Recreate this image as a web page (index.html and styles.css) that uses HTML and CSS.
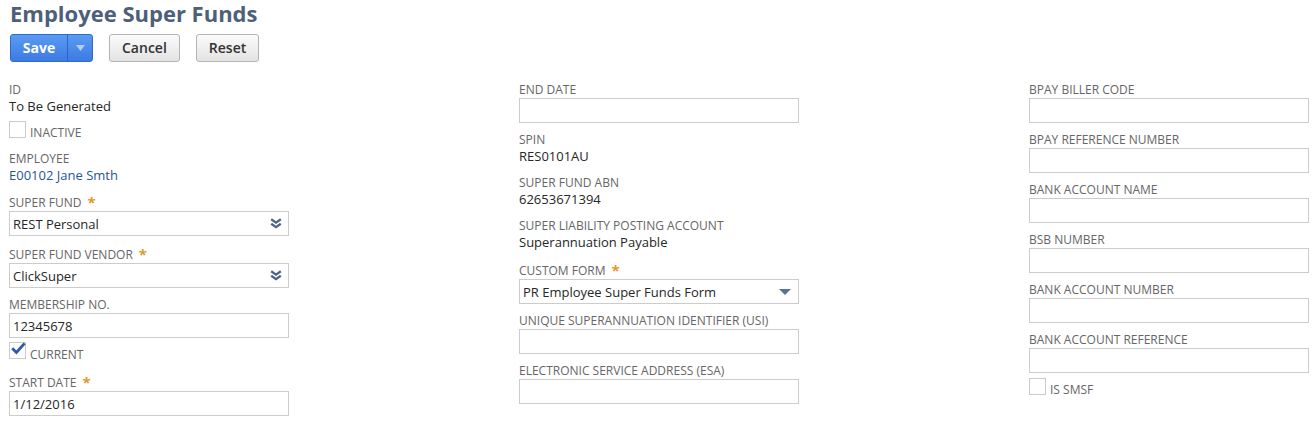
FILE: index.html
```html
<!DOCTYPE html>
<html lang="en">
<head>
<meta charset="utf-8">
<title>Employee Super Funds</title>
<link rel="stylesheet" href="styles.css">
</head>
<body>
<div class="page">
  <h1 class="title">Employee Super Funds</h1>
  <div class="toolbar">
    <div class="split">
      <button class="split-main" type="button">Save</button>
      <button class="split-arrow" type="button" aria-label="More save options">
        <svg width="9" height="6" viewBox="0 0 9 6"><path d="M0 0H9L4.5 6Z" fill="#b5cbef"/></svg>
      </button>
    </div>
    <button class="btn" type="button">Cancel</button>
    <button class="btn" type="button">Reset</button>
  </div>

  <div class="form">
    <div class="col">
      <div class="field read">
        <div class="label">ID</div>
        <div class="value">To Be Generated</div>
      </div>
      <div class="check-row check-inactive">
        <svg class="check" width="17" height="17" viewBox="0 0 17 17"><rect x="0.5" y="0.5" width="16" height="16" fill="#fff" stroke="#cacaca"/></svg>
        <span class="check-text">Inactive</span>
      </div>
      <div class="field read loose">
        <div class="label">Employee</div>
        <div class="value link">E00102 Jane Smth</div>
      </div>
      <div class="field loose">
        <div class="label">Super Fund <span class="req">*</span></div>
        <div class="input select">
          <span>REST Personal</span>
          <svg width="12" height="11" viewBox="0 0 12 11"><path d="M1.2 1.3 6 4.6 10.8 1.3M1.2 5.8 6 9.1 10.8 5.8" fill="none" stroke="#4e6489" stroke-width="2.3"/></svg>
        </div>
      </div>
      <div class="field">
        <div class="label">Super Fund Vendor <span class="req">*</span></div>
        <div class="input select">
          <span>ClickSuper</span>
          <svg width="12" height="11" viewBox="0 0 12 11"><path d="M1.2 1.3 6 4.6 10.8 1.3M1.2 5.8 6 9.1 10.8 5.8" fill="none" stroke="#4e6489" stroke-width="2.3"/></svg>
        </div>
      </div>
      <div class="field">
        <div class="label">Membership No.</div>
        <input class="input" type="text" value="12345678">
      </div>
      <div class="check-row check-current">
        <svg class="check" width="17" height="17" viewBox="0 0 17 17"><rect x="0.5" y="0.5" width="16" height="16" fill="#fff" stroke="#cacaca"/><path d="M3.2 6.2 7.4 10.4 15.6 1.4" fill="none" stroke="#2b5ba6" stroke-width="2.8"/></svg>
        <span class="check-text">Current</span>
      </div>
      <div class="field">
        <div class="label">Start Date <span class="req">*</span></div>
        <input class="input" type="text" value="1/12/2016">
      </div>
    </div>

    <div class="col">
      <div class="field">
        <div class="label">End Date</div>
        <input class="input" type="text" value="">
      </div>
      <div class="field read">
        <div class="label">Spin</div>
        <div class="value">RES0101AU</div>
      </div>
      <div class="field read">
        <div class="label">Super Fund ABN</div>
        <div class="value">62653671394</div>
      </div>
      <div class="field read wide">
        <div class="label">Super Liability Posting Account</div>
        <div class="value">Superannuation Payable</div>
      </div>
      <div class="field">
        <div class="label">Custom Form <span class="req">*</span></div>
        <div class="input select">
          <span>PR Employee Super Funds Form</span>
          <svg class="tri" width="12" height="6" viewBox="0 0 12 6"><path d="M0 0H12L6 6Z" fill="#5b7196"/></svg>
        </div>
      </div>
      <div class="field">
        <div class="label">Unique Superannuation Identifier (USI)</div>
        <input class="input" type="text" value="">
      </div>
      <div class="field">
        <div class="label">Electronic Service Address (ESA)</div>
        <input class="input" type="text" value="">
      </div>
    </div>

    <div class="col">
      <div class="field">
        <div class="label">BPAY Biller Code</div>
        <input class="input" type="text" value="">
      </div>
      <div class="field">
        <div class="label">BPAY Reference Number</div>
        <input class="input" type="text" value="">
      </div>
      <div class="field">
        <div class="label">Bank Account Name</div>
        <input class="input" type="text" value="">
      </div>
      <div class="field">
        <div class="label">BSB Number</div>
        <input class="input" type="text" value="">
      </div>
      <div class="field">
        <div class="label">Bank Account Number</div>
        <input class="input" type="text" value="">
      </div>
      <div class="field">
        <div class="label">Bank Account Reference</div>
        <input class="input" type="text" value="">
      </div>
      <div class="check-row check-smsf">
        <svg class="check" width="17" height="17" viewBox="0 0 17 17"><rect x="0.5" y="0.5" width="16" height="16" fill="#fff" stroke="#cacaca"/></svg>
        <span class="check-text">Is SMSF</span>
      </div>
    </div>
  </div>
</div>
</body>
</html>
```
FILE: styles.css
```css
* { box-sizing: border-box; }

body {
  margin: 0;
  background: #ffffff;
  font-family: "Open Sans", "Liberation Sans", sans-serif;
  color: #262626;
}

.page {
  padding-left: 10px;
}

.title {
  margin: 0;
  font-size: 22px;
  line-height: 26px;
  font-weight: 700;
  color: #4d5f79;
}

.toolbar {
  display: flex;
  gap: 16px;
  margin-top: 8px;
  height: 28px;
}

.btn {
  height: 28px;
  padding: 0 12px;
  border: 1px solid #b3b3b3;
  border-radius: 3px;
  background: linear-gradient(#fbfbfb, #e3e3e3);
  font-family: "Open Sans", "Liberation Sans", sans-serif;
  font-size: 14px;
  font-weight: 600;
  line-height: 26px;
  color: #333333;
}

.split {
  display: flex;
  height: 28px;
  border: 1px solid #2f69cf;
  border-radius: 3px;
  overflow: hidden;
  background: linear-gradient(#5b9bf1, #3b7be3);
}

.split-main {
  width: 56px;
  padding: 0;
  border: 0;
  background: transparent;
  font-family: "Open Sans", "Liberation Sans", sans-serif;
  font-size: 14px;
  font-weight: 700;
  line-height: 26px;
  color: #ffffff;
}

.split-arrow {
  width: 25px;
  padding: 0;
  border: 0;
  border-left: 1px solid #2c63c4;
  background: transparent;
  display: flex;
  align-items: center;
  justify-content: center;
}

.form {
  display: grid;
  grid-template-columns: 510px 510px 280px;
  margin-top: 19px;
  margin-left: -1px;
}

.col {
  display: flex;
  flex-direction: column;
}

.field {
  margin-bottom: 8px;
}

.field.read {
  margin-bottom: 9px;
}

.field.loose {
  margin-bottom: 10px;
}

.field.wide {
  margin-bottom: 11px;
}

.label {
  display: flex;
  align-items: flex-start;
  gap: 6px;
  height: 17px;
  font-size: 12px;
  line-height: 17px;
  color: #666666;
  text-transform: uppercase;
  white-space: nowrap;
}

.req {
  font-size: 15px;
  font-weight: 700;
  line-height: 17px;
  color: #df9a2b;
}

.value {
  font-size: 13px;
  line-height: 17px;
  color: #262626;
}

.value.link {
  color: #255599;
}

.input {
  display: flex;
  align-items: center;
  justify-content: space-between;
  width: 280px;
  height: 25px;
  margin: 0;
  padding: 0 6px 0 3px;
  border: 1px solid #cccccc;
  border-radius: 0;
  background: #ffffff;
  font-family: "Open Sans", "Liberation Sans", sans-serif;
  font-size: 13px;
  color: #262626;
  outline: none;
}

.select .tri {
  margin-right: 1px;
}

.check-row {
  display: flex;
  align-items: flex-start;
  gap: 4px;
  height: 17px;
}

.check {
  flex: none;
}

.check-text {
  padding-top: 3px;
  font-size: 12px;
  line-height: 17px;
  color: #666666;
  text-transform: uppercase;
}

.check-inactive {
  margin-top: -3px;
  margin-bottom: 12px;
}

.check-current {
  margin-top: -4px;
  margin-bottom: 15px;
}

.check-current .check-text {
  padding-top: 4px;
}

.check-smsf {
  margin-top: -3px;
}
```
